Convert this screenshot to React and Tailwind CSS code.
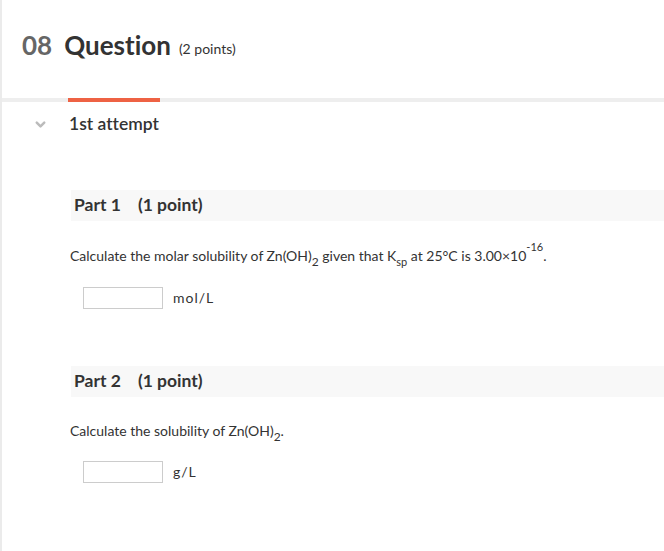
import { ChevronDown } from "lucide-react";

const PartHeader = ({ num }) => (
  <div className="ml-[69px] h-[31px] bg-[#f8f8f8] flex items-center pl-[3px] text-[17.5px] font-bold text-[#333] [font-variant-ligatures:none]">
    <span>Part {num}</span>
    <span className="ml-[17px]">(1 point)</span>
  </div>
);

const Answer = ({ unit }) => (
  <div className="flex items-center ml-[81px]">
    <div className="w-[80px] h-[22px] border border-[#ccc] bg-white" />
    <span className="ml-[10px] text-[14px] text-[#333] tracking-[1px] leading-[20px]">{unit}</span>
  </div>
);

export default function App() {
  return (
    <div
      className="w-[664px] h-[551px] bg-white border-l-2 border-[#ebebeb] overflow-hidden [font-variant-ligatures:none]"
      style={{ fontFamily: "Lato, 'Open Sans', sans-serif" }}
    >
      <div className="h-[98px] flex items-center pl-[20px] pb-[8px]">
        <span className="text-[26px] font-bold text-[#666]">08</span>
        <span className="ml-[12px] text-[26px] font-bold text-[#333]">Question</span>
        <span className="ml-[8px] mt-[6px] text-[14px] text-[#333]">(2 points)</span>
      </div>
      <div className="h-[4px] bg-[#eeeeee] relative">
        <div className="absolute left-[66px] top-0 h-[4px] w-[92px] bg-[#ee6244]" />
      </div>
      <div className="flex items-center h-[46px] pb-[1px]">
        <ChevronDown className="ml-[31px] w-[15px] h-[15px] text-[#bbb]" strokeWidth={4} />
        <span className="ml-[21px] text-[17.5px] text-[#333] font-semibold">1st attempt</span>
      </div>
      <div className="h-[42px]" />
      <PartHeader num={1} />
      <div className="ml-[68px] mt-[25px] text-[14px] leading-[20px] text-[#333]">
        Calculate the molar solubility of Zn(OH)<sub className="text-[12px] leading-none align-[-2px]">2</sub> given that K<sub className="text-[11px] leading-none align-[-2px]">sp</sub> at 25°C is 3.00×10<sup className="text-[11px] leading-none align-[5px]">-16</sup>.
      </div>
      <div className="mt-[21px]">
        <Answer unit="mol/L" />
      </div>
      <div className="h-[57px]" />
      <PartHeader num={2} />
      <div className="ml-[68px] mt-[24px] text-[14px] leading-[20px] text-[#333]">
        Calculate the solubility of Zn(OH)<sub className="text-[12px] leading-none align-[-2px]">2</sub>.
      </div>
      <div className="mt-[20px]">
        <Answer unit="g/L" />
      </div>
    </div>
  );
}
